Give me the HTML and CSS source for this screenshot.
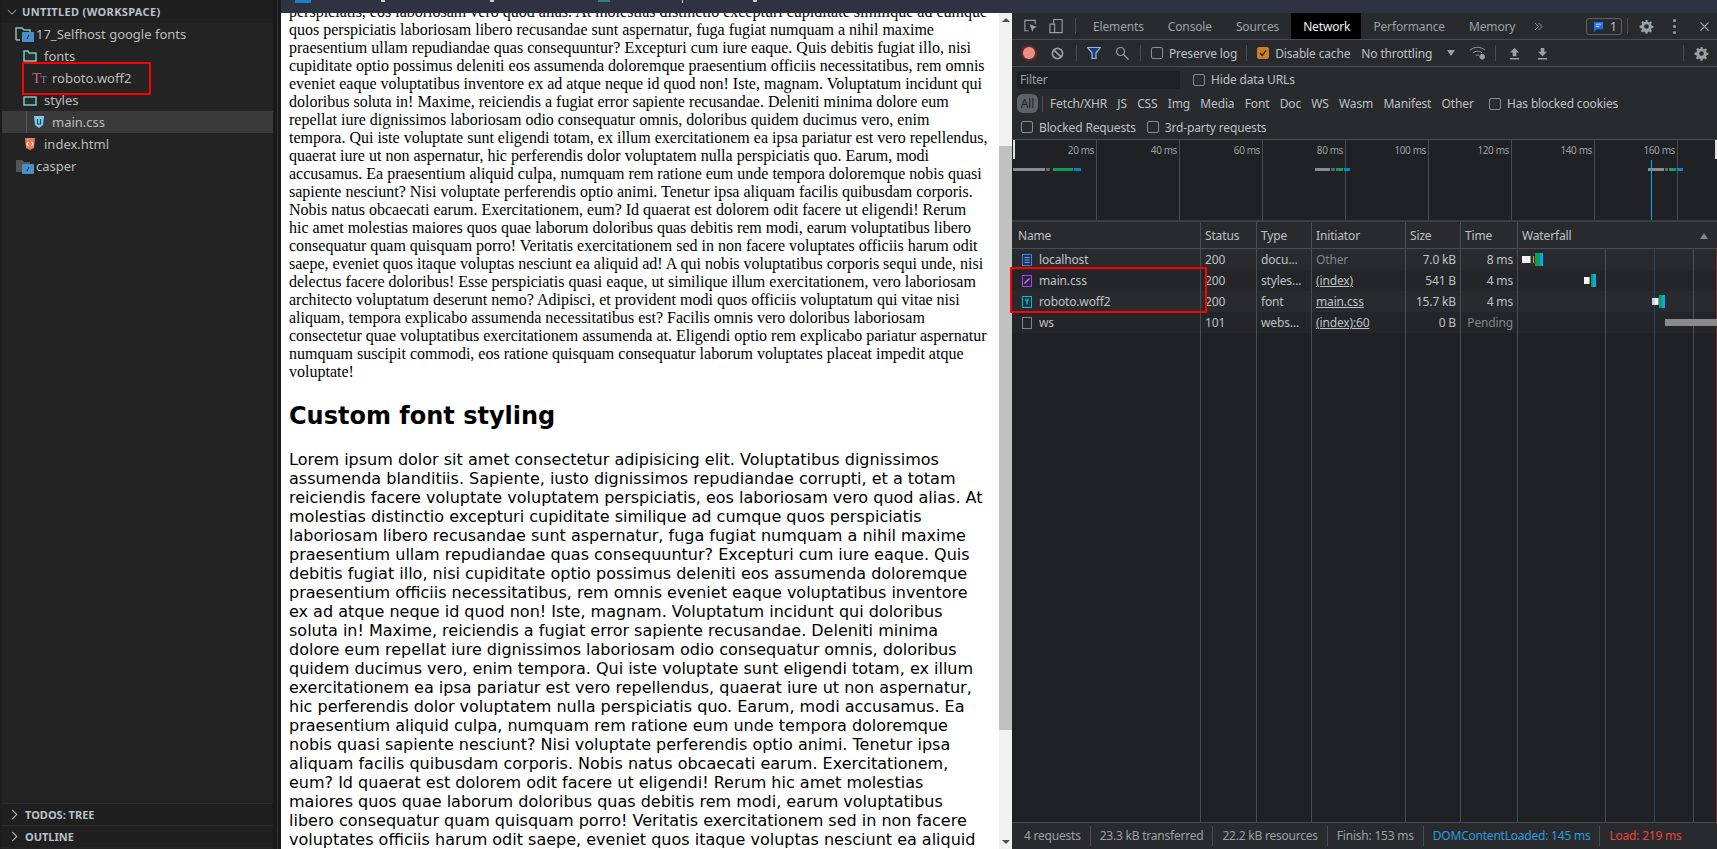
FILE: index.html
```html
<!DOCTYPE html>
<html lang="en">
<head>
<meta charset="utf-8">
<title>Selfhost google fonts</title>
<link rel="stylesheet" href="styles.css">
</head>
<body>
<div class="app">
  <aside class="side">
    <div class="side-main">
      <div class="side-head"><svg class="chev" viewBox="0 0 12 12"><path d="M1 3.500l5 5 5-5"/></svg><span>UNTITLED (WORKSPACE)</span></div>
      <div class="tree lvl1"><svg class="ficon" viewBox="0 0 20 16"><path class="fo" d="M1 14V2h6l2 2h6v2"/><path class="fo" d="M1 14h4"/><rect class="fb" x="7" y="6" width="12" height="10" rx="1"/><path class="fw" d="M12 13l2-4"/></svg><span>17_Selfhost google fonts</span></div>
      <div class="tree lvl2"><svg class="ficon" viewBox="0 0 14 12"><path class="fo2" d="M1 1h4l1 2h7v8H1z"/></svg><span>fonts</span></div>
      <div class="tree lvl3"><span class="tt"><i>T</i><b>T</b></span><span>roboto.woff2</span></div>
      <div class="tree lvl2"><svg class="ficon" viewBox="0 0 14 12"><path class="fo2" d="M1 3h12v8H1z"/></svg><span>styles</span></div>
      <div class="tree lvl3 sel"><svg class="ficon" viewBox="0 0 14 14"><path class="shield" d="M2 1h10l-1 9-4 3-4-3z"/><path class="shw" d="M5.500 4v5h3V4"/></svg><span>main.css</span></div>
      <div class="tree lvl2"><svg class="ficon" viewBox="0 0 14 14"><path class="html" d="M2 1h10l-1 10-4 2-4-2z"/><path class="shw2" d="M5.500 5L4 7l1.500 2M8.500 5L10 7 8.500 9"/></svg><span>index.html</span></div>
      <div class="tree lvl1"><svg class="ficon" viewBox="0 0 20 16"><path class="fg" d="M1 14V2h6l2 2h6v2H7v8z"/><rect class="fb" x="7" y="6" width="12" height="10" rx="1"/><path class="fw" d="M12 13l2-4"/></svg><span>casper</span></div>
      <div class="redbox side-box"></div>
    </div>
    <div class="side-foot"><svg class="chev2" viewBox="0 0 12 12"><path d="M3.500 1l5 5-5 5"/></svg><span>TODOS: TREE</span></div>
    <div class="side-foot"><svg class="chev2" viewBox="0 0 12 12"><path d="M3.500 1l5 5-5 5"/></svg><span>OUTLINE</span></div>
  </aside>
  <div class="split"></div>
  <div class="right">
    <div class="topbar"><span class="tb tb-blue"></span><span class="tb tb-a"></span><span class="tb tb-b"></span><span class="tb tb-teal"></span><span class="tb tb-c"></span><span class="tb tb-d"></span></div>
    <div class="work">
      <main class="page">
        <p class="serif">perspiciatis, eos laboriosam vero quod alias. At molestias distinctio excepturi cupiditate similique ad cumque quos perspiciatis laboriosam libero recusandae sunt aspernatur, fuga fugiat numquam a nihil maxime praesentium ullam repudiandae quas consequuntur? Excepturi cum iure eaque. Quis debitis fugiat illo, nisi cupiditate optio possimus deleniti eos assumenda doloremque praesentium officiis necessitatibus, rem omnis eveniet eaque voluptatibus inventore ex ad atque neque id quod non! Iste, magnam. Voluptatum incidunt qui doloribus soluta in! Maxime, reiciendis a fugiat error sapiente recusandae. Deleniti minima dolore eum repellat iure dignissimos laboriosam odio consequatur omnis, doloribus quidem ducimus vero, enim tempora. Qui iste voluptate sunt eligendi totam, ex illum exercitationem ea ipsa pariatur est vero repellendus, quaerat iure ut non aspernatur, hic perferendis dolor voluptatem nulla perspiciatis quo. Earum, modi accusamus. Ea praesentium aliquid culpa, numquam rem ratione eum unde tempora doloremque nobis quasi sapiente nesciunt? Nisi voluptate perferendis optio animi. Tenetur ipsa aliquam facilis quibusdam corporis. Nobis natus obcaecati earum. Exercitationem, eum? Id quaerat est dolorem odit facere ut eligendi! Rerum hic amet molestias maiores quos quae laborum doloribus quas debitis rem modi, earum voluptatibus libero consequatur quam quisquam porro! Veritatis exercitationem sed in non facere voluptates officiis harum odit saepe, eveniet quos itaque voluptas nesciunt ea aliquid ad! A qui nobis voluptatibus corporis sequi unde, nisi delectus facere doloribus! Esse perspiciatis quasi eaque, ut similique illum exercitationem, vero laboriosam architecto voluptatum deserunt nemo? Adipisci, et provident modi quos officiis voluptatum qui vitae nisi aliquam, tempora explicabo assumenda necessitatibus est? Facilis omnis vero doloribus laboriosam consectetur quae voluptatibus exercitationem assumenda at. Eligendi optio rem explicabo pariatur aspernatur numquam suscipit commodi, eos ratione quisquam consequatur laborum voluptates placeat impedit atque voluptate!</p>
        <h2 class="title">Custom font styling</h2>
        <p class="sans">Lorem ipsum dolor sit amet consectetur adipisicing elit. Voluptatibus dignissimos assumenda blanditiis. Sapiente, iusto dignissimos repudiandae corrupti, et a totam reiciendis facere voluptate voluptatem perspiciatis, eos laboriosam vero quod alias. At molestias distinctio excepturi cupiditate similique ad cumque quos perspiciatis laboriosam libero recusandae sunt aspernatur, fuga fugiat numquam a nihil maxime praesentium ullam repudiandae quas consequuntur? Excepturi cum iure eaque. Quis debitis fugiat illo, nisi cupiditate optio possimus deleniti eos assumenda doloremque praesentium officiis necessitatibus, rem omnis eveniet eaque voluptatibus inventore ex ad atque neque id quod non! Iste, magnam. Voluptatum incidunt qui doloribus soluta in! Maxime, reiciendis a fugiat error sapiente recusandae. Deleniti minima dolore eum repellat iure dignissimos laboriosam odio consequatur omnis, doloribus quidem ducimus vero, enim tempora. Qui iste voluptate sunt eligendi totam, ex illum exercitationem ea ipsa pariatur est vero repellendus, quaerat iure ut non aspernatur, hic perferendis dolor voluptatem nulla perspiciatis quo. Earum, modi accusamus. Ea praesentium aliquid culpa, numquam rem ratione eum unde tempora doloremque nobis quasi sapiente nesciunt? Nisi voluptate perferendis optio animi. Tenetur ipsa aliquam facilis quibusdam corporis. Nobis natus obcaecati earum. Exercitationem, eum? Id quaerat est dolorem odit facere ut eligendi! Rerum hic amet molestias maiores quos quae laborum doloribus quas debitis rem modi, earum voluptatibus libero consequatur quam quisquam porro! Veritatis exercitationem sed in non facere voluptates officiis harum odit saepe, eveniet quos itaque voluptas nesciunt ea aliquid</p>
      </main>
      <div class="scroll"><span class="arrow up"></span><div class="thumb-wrap"><div class="thumb"></div></div><span class="arrow down"></span></div>
      <section class="dev">
        <div class="d-tabs">
          <svg class="ic" viewBox="0 0 16 16"><path class="ln" d="M6 13H2V2h11v4"/><path class="solid" d="M7 6l8 3-3.500 1.500L10 14z"/></svg>
          <svg class="ic" viewBox="0 0 16 16"><path class="ln" d="M5 5V1h9v14H5M1 6h5v9H1z"/></svg>
          <span class="vsep st"></span>
          <span class="tab">Elements</span><span class="tab">Console</span><span class="tab">Sources</span><span class="tab on">Network</span><span class="tab">Performance</span><span class="tab">Memory</span>
          <svg class="more" viewBox="0 0 10 10"><path d="M1 1l4 4-4 4M5 1l4 4-4 4"/></svg>
          <span class="spacer"></span>
          <span class="badge"><svg viewBox="0 0 12 12"><path d="M1 1h10v8H4l-3 3z" fill="#1a73e8"/><path d="M3 3.500h6M3 6h4" stroke="#d2e3fc" stroke-width="1"/></svg>1</span>
          <span class="vsep s2"></span>
          <svg class="gear" viewBox="0 0 16 16"><path d="M7 1h2l.4 2 1.300.6 1.800-1.100 1.400 1.400-1.100 1.800.6 1.300 2 .4v2l-2 .4-.6 1.300 1.100 1.800-1.400 1.400-1.800-1.100-1.300.6-.4 2H7l-.4-2-1.300-.6-1.800 1.100-1.400-1.400 1.100-1.800-.6-1.300-2-.4V7l2-.4.6-1.300L2.500 3.500l1.400-1.400 1.800 1.100L7 3zM8 5.500a2.500 2.500 0 1 0 0 5 2.500 2.500 0 0 0 0-5z" fill-rule="evenodd"/></svg>
          <span class="dots"><i></i><i></i><i></i></span>
          <svg class="close" viewBox="0 0 12 12"><path d="M1.500 1.500l9 9M10.500 1.500l-9 9"/></svg>
        </div>
        <div class="d-tool">
          <span class="rec"></span>
          <svg class="ban" viewBox="0 0 14 14"><circle cx="7" cy="7" r="5.500"/><path d="M3 3l8 8"/></svg>
          <span class="vsep sa"></span>
          <svg class="funnel" viewBox="0 0 14 12"><path d="M.5 .5h13L9 6v5.500H5V6z"/></svg>
          <svg class="mag" viewBox="0 0 14 14"><circle cx="5.500" cy="5.500" r="4"/><path d="M8.500 8.500l5 5"/></svg>
          <span class="vsep sb"></span>
          <span class="cb"></span><span class="lab">Preserve log</span>
          <span class="vsep sc"></span>
          <span class="cb checked"><svg viewBox="0 0 12 12"><path d="M2.500 6l2.500 3 4.500-6"/></svg></span><span class="lab">Disable cache</span>
          <span class="lab throttle">No throttling</span>
          <span class="tri"></span>
          <svg class="wifi" viewBox="0 0 18 14"><path d="M1 4c5-4 11-4 16 0M4 7c3-2.500 7-2.500 10 0M7 10c1-1 3-1 4 0"/><circle cx="14" cy="11" r="2.500"/></svg>
          <span class="vsep sd"></span>
          <svg class="updn" viewBox="0 0 12 14"><path d="M6 1l5 5H8v4H4V6H1zM1 12h10v1.500H1z"/></svg>
          <svg class="updn" viewBox="0 0 12 14"><path d="M4 1h4v4h3l-5 5-5-5h3zM1 12h10v1.500H1z"/></svg>
          <span class="spacer"></span>
          <span class="vsep se"></span>
          <svg class="gear g2" viewBox="0 0 16 16"><path d="M7 1h2l.4 2 1.300.6 1.800-1.100 1.400 1.400-1.100 1.800.6 1.300 2 .4v2l-2 .4-.6 1.300 1.100 1.800-1.400 1.400-1.800-1.100-1.300.6-.4 2H7l-.4-2-1.300-.6-1.800 1.100-1.400-1.400 1.100-1.800-.6-1.300-2-.4V7l2-.4.6-1.300L2.500 3.500l1.400-1.400 1.800 1.100L7 3zM8 5.500a2.500 2.500 0 1 0 0 5 2.500 2.500 0 0 0 0-5z" fill-rule="evenodd"/></svg>
        </div>
        <div class="d-filter">
          <div class="f1"><span class="finput">Filter</span><span class="cb"></span><span class="lab">Hide data URLs</span></div>
          <div class="f2"><span class="all">All</span><span class="vsep s3"></span><span class="ft">Fetch/XHR</span><span class="ft">JS</span><span class="ft">CSS</span><span class="ft">Img</span><span class="ft">Media</span><span class="ft">Font</span><span class="ft">Doc</span><span class="ft">WS</span><span class="ft">Wasm</span><span class="ft">Manifest</span><span class="ft">Other</span><span class="cb c3"></span><span class="lab">Has blocked cookies</span></div>
          <div class="f3"><span class="cb"></span><span class="lab">Blocked Requests</span><span class="cb c4"></span><span class="lab">3rd-party requests</span></div>
        </div>
        <div class="overview">
          <div class="ov-cell">20 ms</div><div class="ov-cell">40 ms</div><div class="ov-cell">60 ms</div><div class="ov-cell">80 ms</div><div class="ov-cell">100 ms</div><div class="ov-cell">120 ms</div><div class="ov-cell">140 ms</div><div class="ov-cell">160 ms</div>
          <i class="handle hl"></i><i class="handle hr"></i>
          <i class="ovb g" style="left:1px;width:32px"></i><i class="ovb k" style="left:34px;width:4px"></i><i class="ovb gr" style="left:41px;width:20px"></i><i class="ovb bl" style="left:62px;width:7px"></i>
          <i class="ovb g" style="left:303px;width:15px"></i><i class="ovb k" style="left:319px;width:4px"></i><i class="ovb gr" style="left:324px;width:7px"></i><i class="ovb bl" style="left:332px;width:6px"></i>
          <i class="ovb g" style="left:636px;width:16px"></i><i class="ovb k" style="left:653px;width:3px"></i><i class="ovb gr" style="left:657px;width:7px"></i><i class="ovb bl" style="left:665px;width:6px"></i>
          <i class="ov-blue"></i>
        </div>
        <div class="table">
          <div class="col c-name">
            <div class="th">Name</div>
            <div class="td"><svg class="fi" viewBox="0 0 10 12"><rect x=".5" y=".5" width="9" height="11" fill="#1d2f52" stroke="#3a7ff0"/><path d="M2.500 3.500h5M2.500 6h5M2.500 8.500h5" stroke="#7aa7f5"/></svg>localhost</div>
            <div class="td"><svg class="fi" viewBox="0 0 10 12"><rect x=".5" y=".5" width="9" height="11" fill="#2c2038" stroke="#a142f4"/><path d="M2.500 8.500l5-5" stroke="#c58af9" stroke-width="1.300"/></svg>main.css</div>
            <div class="td"><svg class="fi" viewBox="0 0 10 12"><rect x=".5" y=".5" width="9" height="11" fill="#10333d" stroke="#12b5cb"/><path d="M3 4h4M5 4v4.500" stroke="#12b5cb" stroke-width="1.500"/></svg>roboto.woff2</div>
            <div class="td"><svg class="fi" viewBox="0 0 10 12"><rect x=".5" y=".5" width="9" height="11" fill="#242528" stroke="#80868b"/></svg>ws</div>
          </div>
          <div class="col c-status"><div class="th">Status</div><div class="td">200</div><div class="td">200</div><div class="td">200</div><div class="td">101</div></div>
          <div class="col c-type"><div class="th">Type</div><div class="td">docu…</div><div class="td">styles…</div><div class="td">font</div><div class="td">webs…</div></div>
          <div class="col c-init"><div class="th">Initiator</div><div class="td dim">Other</div><div class="td"><u>(index)</u></div><div class="td"><u>main.css</u></div><div class="td"><u>(index):60</u></div></div>
          <div class="col c-size"><div class="th">Size</div><div class="td r">7.0 kB</div><div class="td r">541 B</div><div class="td r">15.7 kB</div><div class="td r">0 B</div></div>
          <div class="col c-time"><div class="th">Time</div><div class="td r">8 ms</div><div class="td r">4 ms</div><div class="td r">4 ms</div><div class="td r dim">Pending</div></div>
          <div class="col c-wf">
            <div class="th">Waterfall<span class="sort"></span></div>
            <div class="td"></div><div class="td"></div><div class="td"></div><div class="td"></div>
            <i class="wl" style="left:87px"></i><i class="wl blue" style="left:136px"></i><i class="wl" style="left:175px"></i><i class="wl red" style="left:198px"></i>
            <i class="wb white" style="left:4px;top:34px;width:9px"></i><i class="wb org" style="left:15px;top:34px;width:1px"></i><i class="wb gr tall" style="left:17px;top:31px;width:5px"></i><i class="wb bl tall" style="left:22px;top:31px;width:3px"></i>
            <i class="wb white" style="left:66px;top:55px;width:6px"></i><i class="wb gr tall" style="left:73px;top:52px;width:2px"></i><i class="wb bl tall" style="left:75px;top:52px;width:3px"></i>
            <i class="wb white pale" style="left:134px;top:76px;width:7px"></i><i class="wb gr tall" style="left:141px;top:73px;width:3px"></i><i class="wb bl tall" style="left:144px;top:73px;width:3px"></i>
            <i class="wb pend" style="left:147px;top:97px;width:52px"></i>
          </div>
          <div class="redbox net-box"></div>
        </div>
        <div class="status"><span>4 requests</span><span>23.3 kB transferred</span><span>22.2 kB resources</span><span>Finish: 153 ms</span><span class="dcl">DOMContentLoaded: 145 ms</span><span class="load">Load: 219 ms</span></div>
      </section>
    </div>
  </div>
</div>
</body>
</html>
```
FILE: styles.css
```css
* { box-sizing: border-box; }
html, body { margin: 0; height: 100%; overflow: hidden; }
body { background: #1c1c1c; font-family: "Noto Sans", sans-serif; }
svg { display: block; flex: none; }
.app { display: flex; width: 1717px; height: 849px; }

/* sidebar */
.side { width: 271px; flex: none; margin-left: 2px; padding-bottom: 2px; background: #232323; color: #c6c6c6; display: flex; flex-direction: column; font-size: 13px; }
.side-main { flex: 1; position: relative; }
.side-head { height: 23px; display: flex; align-items: center; gap: 5px; padding-left: 5px; background: #1f1f1f; font-size: 11px; font-weight: 700; letter-spacing: .35px; color: #b8c2cc; }
.chev { width: 10px; height: 10px; fill: none; stroke: #a9b2b8; stroke-width: 1.200; }
.tree { height: 22px; display: flex; align-items: center; white-space: nowrap; color: #bdbdbd; }
.tree.lvl1 { padding-left: 13px; gap: 1px; }
.tree.lvl2 { padding-left: 21px; gap: 7px; }
.tree.lvl3 { padding-left: 30px; gap: 6px; }
.tree.sel { background: linear-gradient(#5a5a5a, #5a5a5a) 24px 0 / 1px 100% no-repeat, #3a3a3a; }
.ficon { width: 14px; height: 14px; }
.lvl1 .ficon { width: 20px; height: 16px; }
.fo { fill: none; stroke: #7cc2bd; stroke-width: 1.500; }
.fo2 { fill: #22302f; stroke: #83c5bf; stroke-width: 1.500; }
.fg { fill: #555; }
.fb { fill: #4a90c8; }
.fw { stroke: #123; fill: none; stroke-width: 1; }
.shield { fill: #7fc8ef; }
.shw { fill: none; stroke: #20475c; stroke-width: 1.200; }
.html { fill: #ee7a55; }
.shw2 { fill: none; stroke: #fff; stroke-width: 1.200; }
.tt { width: 14px; font: 15px/1 "Liberation Serif", serif; display: flex; }
.tt i { font-style: normal; color: #c4636f; }
.tt b { font-size: 11px; font-weight: 400; color: #7d79c0; margin-top: 3px; margin-left: -1px; }
.side-foot { height: 22px; flex: none; display: flex; align-items: center; gap: 5px; padding-left: 7px; border-top: 1px solid #2c2c2c; font-size: 11px; font-weight: 700; color: #b8c2cc; background: #1f1f1f; }
.chev2 { width: 11px; height: 11px; fill: none; stroke: #a9b2b8; stroke-width: 1.200; }
.redbox { position: absolute; border: 2px solid #f00; border-radius: 1px; pointer-events: none; }
.side-box { left: 20px; top: 62px; width: 129px; height: 33px; }

.split { width: 8px; flex: none; background: linear-gradient(#333, #333) 4px 0 / 1px 100% no-repeat, #1a1a1a; }

/* right */
.right { flex: 1; min-width: 0; display: flex; flex-direction: column; }
.topbar { height: 13px; flex: none; background: #2f3241; display: flex; align-items: flex-start; padding-left: 14px; }
.tb { height: 2px; background: #ccc; width: 4px; }
.tb-blue { width: 16px; height: 3px; background: #1b7fc4; }
.tb-a { margin-left: 70px; }
.tb-b { margin-left: 105px; }
.tb-teal { width: 12px; background: #2f7f7a; margin-left: 104px; }
.tb-c { width: 1px; height: 3px; margin-left: 72px; }
.tb-d { margin-left: 70px; }
.work { flex: 1; display: flex; min-height: 0; }

.page { width: 718px; flex: none; background: #fff; color: #000; overflow: hidden; padding: 0 11px 0 8px; }
.serif { margin: -10px 0 0; font: 16px/18px "Liberation Serif", serif; }
.title { margin: 21px 0 20px; font: 700 24px/28px "DejaVu Sans", sans-serif; }
.sans { margin: 0; font: 16px/19px "DejaVu Sans", sans-serif; }

.scroll { width: 13px; flex: none; background: #f1f1f1; display: flex; flex-direction: column; align-items: center; }
.arrow { width: 0; height: 0; border-left: 4px solid transparent; border-right: 4px solid transparent; flex: none; margin: 5px 0; }
.arrow.up { border-bottom: 4px solid #505050; }
.arrow.down { border-top: 4px solid #505050; }
.thumb-wrap { flex: 1; width: 100%; padding: 119px 0 105px; }
.thumb { height: 100%; background: #c1c1c1; }

/* devtools */
.dev { flex: 1; min-width: 0; background: #292a2d; color: #bdc1c6; font: 12px "Noto Sans", sans-serif; letter-spacing: -.15px; display: flex; flex-direction: column; }
.d-tabs, .d-tool { flex: none; height: 27px; display: flex; align-items: center; border-bottom: 1px solid #494c50; }
.spacer { flex: 1; }
.ic { width: 15px; height: 16px; margin-left: 11px; }
.ln { fill: none; stroke: #9aa0a6; stroke-width: 1.200; }
.solid { fill: #9aa0a6; }
.vsep { width: 1px; height: 16px; background: #494c50; flex: none; }
.vsep.st { margin: 0 5px 0 11px; }
.vsep.s2 { margin: 0 11px 0 5px; }
.vsep.sa { margin: 0 8px 0 12px; }
.vsep.sb { margin: 0 10px 0 11px; }
.vsep.sc { margin: 0 10px 0 9px; }
.vsep.sd { margin: 0 13px 0 9px; }
.vsep.se { margin: 0 10px 0 0; }
.vsep.s3 { margin: 0 7px 0 4px; }
.tab { height: 26px; display: flex; align-items: center; padding: 0 12px; color: #9aa0a6; white-space: nowrap; }
.tab.on { background: #000; color: #f1f3f4; padding: 0 11px 0 12px; }
.more { width: 9px; height: 9px; margin-left: 7px; fill: none; stroke: #9aa0a6; stroke-width: 1.100; }
.badge { display: flex; align-items: center; gap: 6px; width: 36px; height: 17px; border: 1px solid #5f6368; border-radius: 3px; padding-left: 6px; color: #bdc1c6; }
.badge svg { width: 11px; height: 11px; }
.gear { width: 15px; height: 15px; fill: #9aa0a6; }
.dots { display: flex; flex-direction: column; gap: 3px; margin: 0 23px 0 19px; }
.dots i { width: 3px; height: 3px; background: #9aa0a6; border-radius: 50%; }
.close { width: 11px; height: 11px; fill: none; stroke: #9aa0a6; stroke-width: 1.500; margin-right: 7px; }
.rec { width: 12px; height: 12px; border-radius: 50%; background: #f28b82; box-shadow: 0 0 3px 1px #7d3b37; margin: 0 10px 0 11px; flex: none; }
.ban { width: 13px; height: 13px; fill: none; stroke: #9aa0a6; stroke-width: 1.800; margin-left: 6px; }
.funnel { width: 14px; height: 12px; fill: #1f3f73; stroke: #8ab4f8; stroke-width: 1.200; margin: 0 14px 0 2px; }
.mag { width: 14px; height: 14px; fill: none; stroke: #9aa0a6; stroke-width: 1.200; }
.cb { width: 12px; height: 12px; flex: none; border: 1px solid #8a8d91; border-radius: 2px; display: block; margin-right: 6px; }
.cb.checked { background: #c97f2a; border-color: #c97f2a; }
.cb.checked svg { width: 10px; height: 10px; fill: none; stroke: #2a2015; stroke-width: 1.500; }
.lab { color: #bdc1c6; white-space: nowrap; }
.throttle { margin-left: 11px; }
.tri { width: 0; height: 0; border-left: 4px solid transparent; border-right: 4px solid transparent; border-top: 6px solid #9aa0a6; margin-left: 15px; }
.wifi { width: 17px; height: 14px; fill: #9aa0a6; stroke: #9aa0a6; stroke-width: 1; margin-left: 14px; }
.wifi path { fill: none; }
.updn { width: 11px; height: 13px; fill: #9aa0a6; margin-right: 17px; }
.g2 { margin-right: 8px; }

.d-filter { height: 73px; flex: none; border-bottom: 1px solid #494c50; display: flex; flex-direction: column; }
.f1, .f2, .f3 { display: flex; align-items: center; white-space: nowrap; }
.f1 { height: 25px; padding-left: 5px; }
.finput { width: 163px; height: 18px; background: #202124; color: #9aa0a6; padding-left: 3px; line-height: 17px; margin-right: 13px; }
.f2 { height: 23px; padding-left: 5px; }
.all { background: #5f6368; color: #202124; border-radius: 6px; width: 21px; height: 19px; line-height: 19px; text-align: center; }
.ft { margin-right: 10.300px; color: #bdc1c6; }
.cb.c3 { margin-left: 5px; }
.f3 { height: 24px; padding-left: 9px; }
.cb.c4 { margin-left: 11px; }

.overview { height: 82px; flex: none; position: relative; background: #202124; display: flex; padding-left: 2px; border-bottom: 2px solid #3c3e42; }
.ov-cell { width: 83px; flex: none; height: 100%; border-right: 1px solid #494c50; text-align: right; padding: 3px 2px 0 0; font-size: 10px; letter-spacing: -.4px; color: #9aa0a6; }
.handle { position: absolute; top: 0; width: 2px; height: 19px; background: #e0e0e0; }
.hl { left: 1px; }
.hr { right: 0; }
.ovb { position: absolute; top: 28px; height: 3px; }
.ovb.g { background: #8a8a8a; }
.ovb.k { background: #666; }
.ovb.gr { background: #0f9d58; }
.ovb.bl { background: #0288d1; }
.ov-blue { position: absolute; left: 639px; top: 20px; bottom: 0; width: 1px; background: #03a9f4; }

.table { flex: 1; min-height: 0; display: flex; position: relative; background: #202124; }
.col { flex: none; border-right: 1px solid #494c50; }
.c-name { width: 189px; }
.c-status { width: 56px; }
.c-type { width: 55px; }
.c-init { width: 94px; }
.c-size { width: 55px; }
.c-time { width: 57px; }
.c-wf { flex: 1; border-right: 0; position: relative; }
.th { height: 27px; display: flex; align-items: center; padding-left: 4px; background: #292a2d; border-bottom: 1px solid #494c50; color: #bdc1c6; white-space: nowrap; position: relative; }
.c-name .th { padding-left: 6px; }
.td { height: 21px; display: flex; align-items: center; padding: 0 4px; white-space: nowrap; color: #bdc1c6; overflow: hidden; }
.td:nth-child(even) { background: #292a2d; }
.td:nth-child(odd) { background: #242528; }
.td.r { justify-content: flex-end; }
.td.dim { color: #80868b; }
.td u { text-decoration: underline; }
.fi { width: 10px; height: 12px; margin: 0 7px 0 6px; flex: none; }
.sort { position: absolute; right: 9px; top: 11px; width: 0; height: 0; border-left: 4px solid transparent; border-right: 4px solid transparent; border-bottom: 6px solid #80868b; }
.wl { position: absolute; top: 27px; bottom: 0; width: 1px; background: #494c50; }
.wl.blue { background: #1a4a7a; }
.wl.red { background: #6b2b2b; }
.wb { position: absolute; height: 7px; }
.wb.tall { height: 13px; }
.wb.white { background: #f5f5f5; border-right: 1px solid #999; }
.wb.pale { background: linear-gradient(90deg, #c6d8ea 0 3px, #f5f5f5 3px); }
.wb.org { background: #f29900; }
.wb.gr { background: #0f9d58; }
.wb.bl { background: #03a9f4; }
.wb.pend { background: #8a8a8a; }
.net-box { left: -2px; top: 45px; width: 197px; height: 46px; }

.status { height: 27px; flex: none; display: flex; align-items: center; border-top: 1px solid #494c50; background: #292a2d; padding-left: 12px; white-space: nowrap; color: #9aa0a6; letter-spacing: -.22px; }
.status span { padding-right: 9px; margin-right: 9px; border-right: 1px solid #494c50; line-height: 20px; }
.status .dcl { color: #2d9cdb; }
.status .load { color: #e8453c; border-right: 0; }
```
